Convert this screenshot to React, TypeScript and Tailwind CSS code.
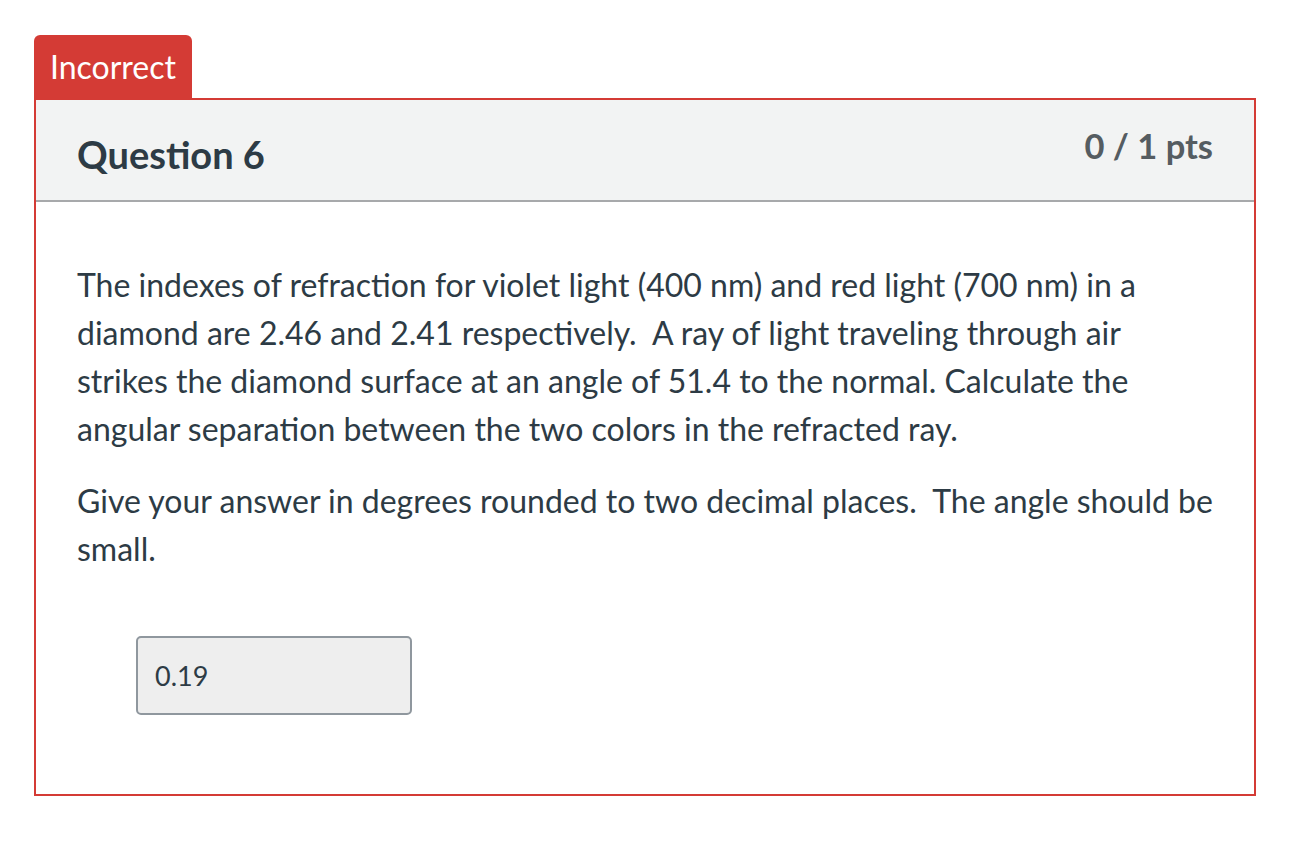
export default function App() {
  return (
    <div className="min-h-screen w-full bg-white pt-[35px] pl-[34px] pr-[56px]" style={{ fontFamily: 'Lato, "Open Sans", sans-serif' }}>
      <div className="flex">
        <div className="flex h-[63px] items-center rounded-t-md bg-[#d43b35] px-[16px] text-[32px] text-white">
          Incorrect
        </div>
      </div>
      <div className="border-2 border-[#d43b35]">
        <div className="flex h-[102px] items-center justify-between border-b-2 border-[#a7a9ab] bg-[#f2f3f3] pl-[41px] pr-[41px]">
          <h2 className="mt-[8px] text-[38px] font-bold text-[#2d3b45]">Question 6</h2>
          <div className="mb-[8px] text-[34.5px] font-bold text-[#555c61]">0 / 1 pts</div>
        </div>
        <div className="pl-[41px] pr-[39px] pt-[59px] pb-[79px] text-[32px] leading-[48px] text-[#2d3b45]">
          <p>
            The indexes of refraction for violet light (400 nm) and red light (700 nm) in a diamond are 2.46 and 2.41
            respectively.&nbsp; A ray of light traveling through air strikes the diamond surface at an angle of 51.4 to the
            normal. Calculate the angular separation between the two colors in the refracted ray.
          </p>
          <p className="mt-[24px]">
            Give your answer in degrees rounded to two decimal places.&nbsp; The angle should be small.
          </p>
          <div className="mt-[63px] ml-[59px] flex h-[79px] w-[276px] items-center rounded-[5px] border-2 border-[#8f979e] bg-[#eeeeee] px-[17px] text-[27px] text-[#2d3b45]">
            0.19
          </div>
        </div>
      </div>
    </div>
  );
}
